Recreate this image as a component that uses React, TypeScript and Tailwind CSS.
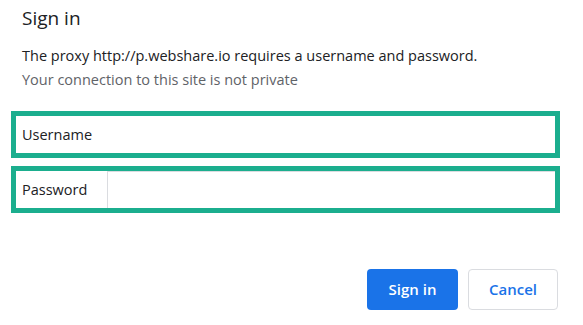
export default function App() {
	return (
		<main className="h-[325px] w-[583px] overflow-hidden bg-white font-['Open_Sans',sans-serif]">
			<div className="px-[22px] pt-[3px]">
				<h1 className="text-[19px] leading-[30px] text-[#202124]">Sign in</h1>
				<p className="mt-[13px] text-[14.5px] leading-[20px] text-[#202124]">
					The proxy http://p.webshare.io requires a username and password.
				</p>
				<p className="mt-[4px] text-[14.5px] leading-[20px] text-[#5f6368]">
					Your connection to this site is not private
				</p>
			</div>

			<div className="mt-[21px] ml-[11px] flex w-[549px] flex-col gap-[8px]">
				<div className="flex h-[47px] items-center border-[5px] border-[#1bae8e] pl-[6px]">
					<span className="text-[14.5px] text-[#202124]">Username</span>
				</div>
				<div className="flex h-[47px] border-[5px] border-[#1bae8e]">
					<span className="flex w-[91px] items-center pl-[6px] text-[14.5px] text-[#202124]">
						Password
					</span>
					<div className="flex-1 border-t border-l border-[#dadce0]" />
				</div>
			</div>

			<div className="mt-[56px] flex justify-end gap-[10px] pr-[25px]">
				<button
					type="button"
					className="h-[41px] w-[91px] rounded-[4px] bg-[#1a73e8] text-[15px] font-semibold text-white"
				>
					Sign in
				</button>
				<button
					type="button"
					className="h-[41px] w-[90px] rounded-[4px] border border-[#dadce0] bg-white text-[15px] font-semibold text-[#1a73e8]"
				>
					Cancel
				</button>
			</div>
		</main>
	);
}
